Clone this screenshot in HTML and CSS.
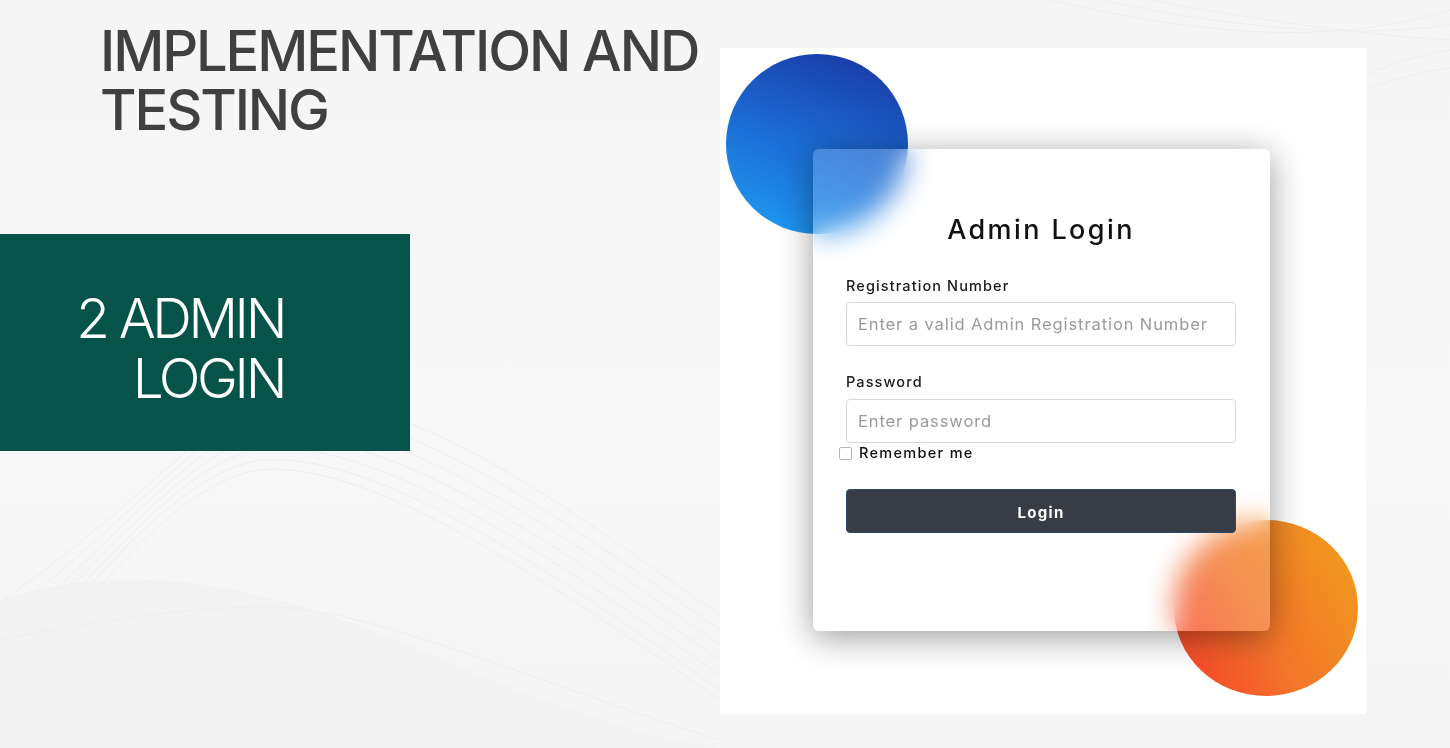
FILE: index.html
```html
<!DOCTYPE html>
<html lang="en">
<head>
<meta charset="utf-8">
<title>Implementation and Testing</title>
<link rel="stylesheet" href="styles.css">
</head>
<body>
<div class="slide">
  <svg class="waves" width="1450" height="748" viewBox="0 0 1450 748" aria-hidden="true">
    <path class="wave-fill" d="M0 600 C 120 560, 260 580, 420 650 C 560 710, 650 740, 720 748 L 0 748 Z"/>
    <g class="wave-lines">
      <path d="M0 720 C 80 600, 180 480, 260 470 C 360 460, 520 560, 720 700"/>
      <path d="M0 700 C 80 590, 180 470, 262 460 C 370 452, 530 555, 720 690"/>
      <path d="M0 680 C 90 575, 190 455, 265 448 C 380 442, 540 548, 720 675"/>
      <path d="M0 660 C 100 560, 200 440, 268 436 C 390 430, 550 540, 720 660"/>
      <path d="M0 640 C 110 545, 210 425, 270 422 C 400 418, 560 532, 720 645"/>
      <path d="M0 620 C 120 530, 220 410, 272 408 C 410 405, 570 525, 720 630"/>
      <path d="M0 602 C 130 515, 230 396, 275 395 C 420 392, 580 518, 720 615"/>
      <path d="M0 640 C 150 610, 260 600, 320 612 C 420 630, 560 690, 720 740"/>
      <path d="M1050 0 C 1180 30, 1320 50, 1450 10"/>
      <path d="M1100 0 C 1220 25, 1340 40, 1450 25"/>
      <path d="M1150 0 C 1260 20, 1360 35, 1450 40"/>
      <path d="M1366 90 C 1390 80, 1420 72, 1450 68"/>
      <path d="M1366 75 C 1395 62, 1420 55, 1450 50"/>
    </g>
  </svg>

  <div class="left">
    <h1 class="title"><span class="title-line">IMPLEMENTATION AND</span><span class="title-line">TESTING</span></h1>
    <div class="section-box">
      <p class="section-text">2 ADMIN<br>LOGIN</p>
    </div>
  </div>

  <div class="shot">
    <span class="blob blob-blue"></span>
    <span class="blob blob-orange"></span>
    <div class="card">
      <h2 class="card-title">Admin Login</h2>
      <label class="field-label">Registration Number</label>
      <div class="input">Enter a valid Admin Registration Number</div>
      <label class="field-label field-label-2">Password</label>
      <div class="input">Enter password</div>
      <div class="remember">
        <span class="checkbox"></span>
        <span class="remember-text">Remember me</span>
      </div>
      <div class="btn">Login</div>
    </div>
  </div>
</div>
</body>
</html>
```

FILE: styles.css
```css
html, body {
  margin: 0;
  padding: 0;
}

body {
  width: 1450px;
  height: 748px;
  overflow: hidden;
  background: #f7f7f7;
}

.slide {
  position: relative;
  width: 1450px;
  height: 748px;
  display: flex;
  background: linear-gradient(180deg, #f5f5f5 0%, #f8f8f8 60%, #f5f5f5 100%);
}

.waves {
  position: absolute;
  left: 0;
  top: 0;
  z-index: 0;
}

.wave-fill {
  fill: #f2f2f2;
}

.wave-lines path {
  fill: none;
  stroke: #eeeeee;
  stroke-width: 1;
}

.left {
  position: relative;
  z-index: 1;
  width: 720px;
  flex: none;
}

.title {
  margin: 0;
  padding: 22px 0 0 100px;
  font-family: Inter, "Liberation Sans", sans-serif;
  font-weight: 500;
  font-size: 56px;
  line-height: 59px;
  letter-spacing: -2.1px;
  color: #404040;
}

.title-line {
  display: block;
  height: 59px;
}

.section-box {
  margin-top: 94px;
  width: 410px;
  height: 217px;
  background: #06534a;
  box-sizing: border-box;
  padding: 54px 126px 0 0;
}

.section-text {
  margin: 0;
  text-align: right;
  font-family: Inter, "Liberation Sans", sans-serif;
  font-weight: 300;
  font-size: 55px;
  line-height: 60px;
  letter-spacing: -3.4px;
  color: #ffffff;
}

.shot {
  position: relative;
  z-index: 1;
  flex: none;
  margin-top: 48px;
  width: 646px;
  height: 666px;
  background: #ffffff;
  box-sizing: border-box;
  padding: 101px 0 0 93px;
}

.blob {
  position: absolute;
  width: 182px;
  height: 180px;
  border-radius: 50%;
}

.blob-blue {
  left: 6px;
  top: 6px;
  background: linear-gradient(200deg, #1a3ea9 10%, #1c6fd6 55%, #1f9af2 95%);
}

.blob-orange {
  left: 454px;
  top: 472px;
  width: 184px;
  height: 176px;
  background: linear-gradient(60deg, #f4492a 10%, #f3762a 45%, #f09c1c 95%);
}

.card {
  position: relative;
  z-index: 2;
  width: 457px;
  height: 482px;
  box-sizing: border-box;
  padding: 65px 34px 0 33px;
  border-radius: 6px;
  background: rgba(255, 255, 255, 0.2);
  backdrop-filter: blur(14px);
  box-shadow: 0 6px 34px rgba(0, 0, 0, 0.4);
  font-family: Inter, "Open Sans", sans-serif;
}

.card-title {
  margin: 0;
  text-align: center;
  font-size: 27px;
  line-height: 32px;
  font-weight: 500;
  letter-spacing: 2.4px;
  color: #111111;
}

.field-label {
  display: block;
  margin-top: 31px;
  margin-bottom: 8px;
  font-size: 14.5px;
  line-height: 17px;
  font-weight: 500;
  letter-spacing: 1.1px;
  color: #1a1a1a;
}

.field-label-2 {
  margin-top: 27px;
  margin-bottom: 9px;
}

.input {
  height: 44px;
  box-sizing: border-box;
  border: 1px solid #d9d9d9;
  border-radius: 4px;
  padding: 0 11px;
  font-size: 16.5px;
  line-height: 42px;
  letter-spacing: 0.9px;
  color: #9a9a9a;
  white-space: nowrap;
}

.remember {
  display: flex;
  align-items: center;
  gap: 7px;
  margin: 2px 0 0 -7px;
  height: 16px;
}

.checkbox {
  width: 11px;
  height: 11px;
  border: 1px solid #b5b5b5;
  border-radius: 2px;
  background: #ffffff;
}

.remember-text {
  font-size: 14.5px;
  line-height: 16px;
  font-weight: 500;
  letter-spacing: 1.3px;
  color: #111111;
}

.btn {
  margin-top: 28px;
  height: 44px;
  box-sizing: border-box;
  border: 1px solid #2e4a6b;
  border-radius: 4px;
  background: #373c45;
  color: #ffffff;
  text-align: center;
  font-size: 15px;
  font-weight: 700;
  padding-top: 4px;
  line-height: 38px;
  letter-spacing: 1.3px;
}
```
